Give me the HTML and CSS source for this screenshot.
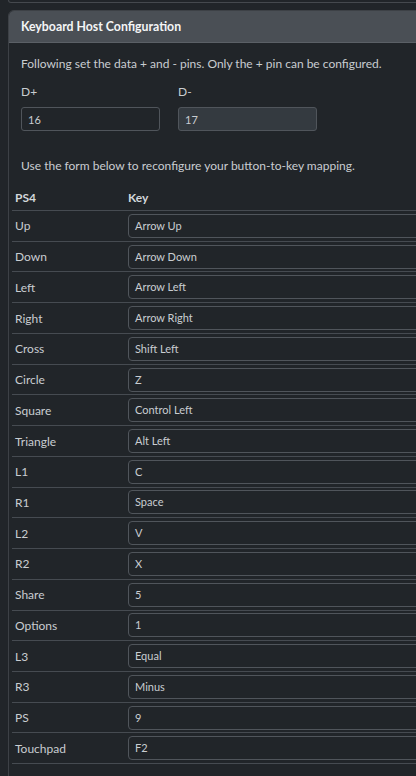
FILE: index.html
```html
<!DOCTYPE html>
<html>
<head>
<meta charset="utf-8">
<link rel="stylesheet" href="styles.css">
</head>
<body>
<div class="page">
  <div class="prev-card"></div>
  <div class="card">
    <div class="card-header">Keyboard Host Configuration</div>
    <div class="card-body">
      <p class="intro">Following set the data + and - pins. Only the + pin can be configured.</p>
      <div class="pins">
        <div class="field">
          <label class="label">D+</label>
          <input class="input" type="text" value="16">
        </div>
        <div class="field">
          <label class="label">D-</label>
          <input class="input disabled" type="text" value="17" disabled>
        </div>
      </div>
      <p class="hint">Use the form below to reconfigure your button-to-key mapping.</p>
      <table class="map">
        <thead>
          <tr><th class="c1">PS4</th><th>Key</th></tr>
        </thead>
        <tbody>
          <tr><td>Up</td><td><div class="sel">Arrow Up</div></td></tr>
          <tr><td>Down</td><td><div class="sel">Arrow Down</div></td></tr>
          <tr><td>Left</td><td><div class="sel">Arrow Left</div></td></tr>
          <tr><td>Right</td><td><div class="sel">Arrow Right</div></td></tr>
          <tr><td>Cross</td><td><div class="sel">Shift Left</div></td></tr>
          <tr><td>Circle</td><td><div class="sel">Z</div></td></tr>
          <tr><td>Square</td><td><div class="sel">Control Left</div></td></tr>
          <tr><td>Triangle</td><td><div class="sel">Alt Left</div></td></tr>
          <tr><td>L1</td><td><div class="sel">C</div></td></tr>
          <tr><td>R1</td><td><div class="sel">Space</div></td></tr>
          <tr><td>L2</td><td><div class="sel">V</div></td></tr>
          <tr><td>R2</td><td><div class="sel">X</div></td></tr>
          <tr><td>Share</td><td><div class="sel">5</div></td></tr>
          <tr><td>Options</td><td><div class="sel">1</div></td></tr>
          <tr><td>L3</td><td><div class="sel">Equal</div></td></tr>
          <tr><td>R3</td><td><div class="sel">Minus</div></td></tr>
          <tr><td>PS</td><td><div class="sel">9</div></td></tr>
          <tr><td>Touchpad</td><td><div class="sel">F2</div></td></tr>
        </tbody>
      </table>
    </div>
  </div>
</div>
</body>
</html>
```
FILE: styles.css
```css
html, body {
  margin: 0;
  padding: 0;
  background: #212529;
  overflow: hidden;
}
body {
  font-family: "Lato", "Noto Sans", sans-serif;
  font-size: 12px;
  color: #c9cdd1;
}
.page {
  width: 640px;
  padding-left: 8px;
}
.prev-card {
  height: 2px;
  border: 1px solid #45494e;
  border-top: none;
  border-radius: 0 0 6px 6px;
}
.card {
  margin-top: 7px;
  border: 1px solid #3d4146;
  border-radius: 6px;
  overflow: hidden;
}
.card-header {
  height: 31px;
  line-height: 31px;
  padding: 0 12px;
  background: #4a4f55;
  border-bottom: 1px solid #5b6066;
  color: #f4f5f6;
  font-weight: 700;
  font-size: 12.3px;
}
.card-body {
  padding: 12px 12px 20px;
}
.intro {
  margin: 0;
  line-height: 18px;
}
.pins {
  display: flex;
  gap: 18px;
  margin-top: 10px;
}
.field {
  display: flex;
  flex-direction: column;
  width: 139px;
}
.label {
  line-height: 18px;
  margin-bottom: 6px;
}
.input {
  box-sizing: border-box;
  height: 24px;
  width: 139px;
  margin: 0;
  padding: 0 6px;
  background: #212529;
  border: 1px solid #50555b;
  border-radius: 3px;
  color: #c9cdd1;
  font-family: inherit;
  font-size: 11px;
}
.input.disabled {
  background: #343a40;
  color: #c9cdd1;
}
.hint {
  margin: 26px 0 0;
  line-height: 18px;
}
.map {
  margin: 9px -9px 0;
  border-collapse: collapse;
  width: calc(100% + 9px);
}
.map th, .map td {
  text-align: left;
  padding: 0 3px;
  border-bottom: 1px solid #464b51;
}
.map th {
  font-weight: 700;
  height: 26px;
  color: #d3d7db;
}
.map .c1 {
  width: 107px;
}
.map td {
  height: 29.74px;
}
.sel {
  box-sizing: border-box;
  height: 24px;
  line-height: 22px;
  border: 1px solid #50555b;
  border-radius: 4px;
  padding: 0 6px;
  font-size: 11px;
  color: #c9cdd1;
}
```
